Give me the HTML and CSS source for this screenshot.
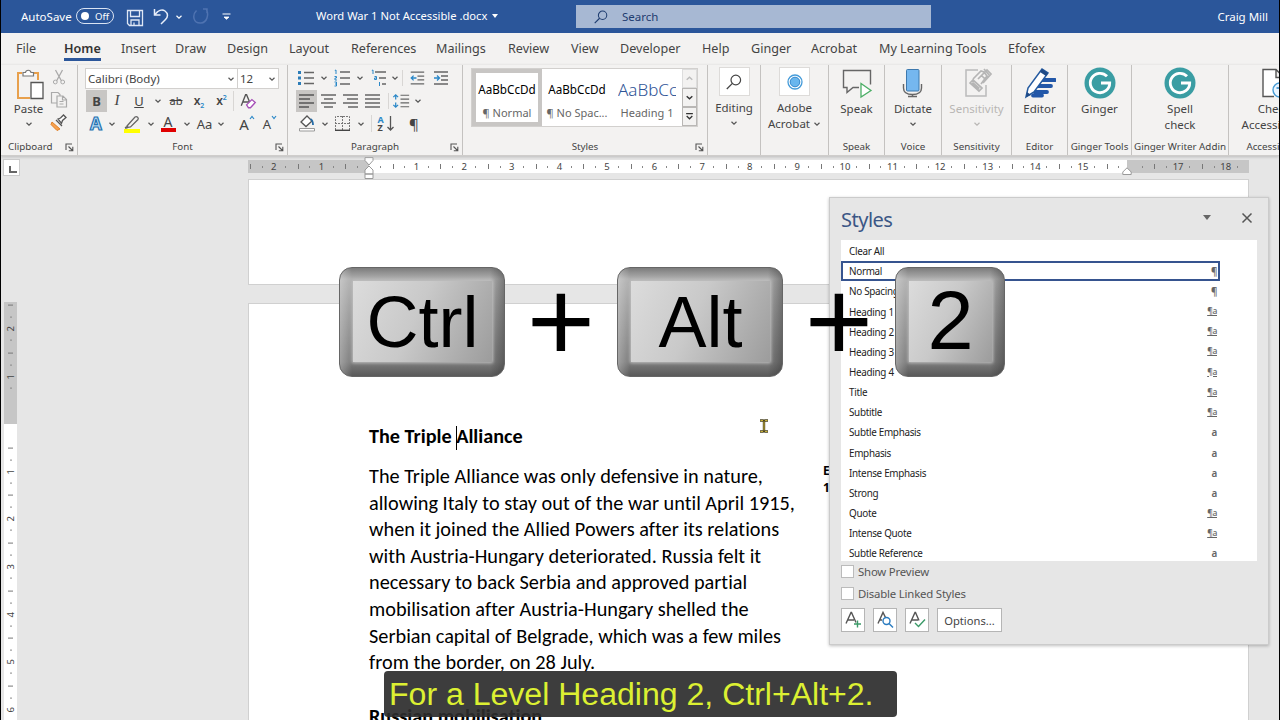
FILE: index.html
```html
<!DOCTYPE html>
<html lang="en">
<head>
    <meta charset="UTF-8">
    <meta name="viewport" content="width=device-width, initial-scale=1.0">
    <title>Word War 1 Not Accessible .docx</title>
    <link rel="stylesheet" href="styles.css">
</head>
<body>
    <!-- shared icons -->
    <svg class="defs">
        <symbol id="chev" viewBox="0 0 8 8"><path d="M1.5 2.8 4 5.2 6.5 2.8" fill="none" stroke="currentColor" stroke-width="1.2"/></symbol>
        <symbol id="launch" viewBox="0 0 9 9"><path d="M1 7V1h6M3.5 3.5l4 4M7.8 3.8v4h-4" fill="none" stroke="#555" stroke-width="1.1"/></symbol>
        <symbol id="ginger" viewBox="0 0 32 32"><circle cx="16" cy="16" r="15.5" fill="#3a9da3"/><path d="M23 9.3A9.7 9.7 0 1 0 25.7 16H17" fill="none" stroke="#fff" stroke-width="2.8"/></symbol>
        <symbol id="lens" viewBox="0 0 16 16"><circle cx="9.8" cy="6" r="4.8" fill="none" stroke="currentColor" stroke-width="1.2"/><path d="M6.4 9.4.8 15" stroke="currentColor" stroke-width="1.3"/></symbol>
    </svg>

    <div class="window">
        <div class="titlebar">
            <span class="autosave">AutoSave</span>
            <span class="toggle"><i></i>Off</span>
            <svg class="save" width="18" height="18" viewBox="0 0 18 18"><path d="M1.5 1.5h15v15h-13l-2-2zM4.5 1.5v6h9v-6M5 16.5v-5.500h8v5.500M8 16v-2.500" fill="none" stroke="#dfe7f5" stroke-width="1.3"/></svg>
            <svg class="undo" width="17" height="17" viewBox="0 0 17 17"><path d="M1.500 1v6h6M2 6.500C5 2.500 9 1 12 3c3.500 2.500 3 6 .5 8.500L8 16" fill="none" stroke="#e8eefa" stroke-width="1.5"/></svg>
            <svg class="chev undo-chev"><use href="#chev"/></svg>
            <svg class="redo" width="17" height="17" viewBox="0 0 17 17"><path d="M11 1h4v4M14.500 1.500C17 7 15 14.500 9 15 1 15.500 0 7 4.500 2.500" fill="none" stroke="#4f73b1" stroke-width="1.5"/></svg>
            <svg class="customise" width="9" height="8" viewBox="0 0 9 8"><path d="M.5 1h8" stroke="#fff"/><path d="m2 4 2.500 2.300L7 4z" fill="#fff" stroke="#fff" stroke-width=".8"/></svg>
            <span class="doc-name">Word War 1 Not Accessible .docx</span>
            <span class="caret-down"></span>
            <div class="search"><svg width="14" height="14"><use href="#lens"/></svg>Search</div>
            <span class="user">Craig Mill</span>
        </div>

        <div class="tabs">
            <span>File</span><span class="active">Home</span><span>Insert</span><span>Draw</span><span>Design</span><span>Layout</span><span>References</span><span>Mailings</span><span>Review</span><span>View</span><span>Developer</span><span>Help</span><span>Ginger</span><span>Acrobat</span><span>My Learning Tools</span><span>Efofex</span>
        </div>

        <div class="ribbon">
            <div class="group">
                <div class="clipboard">
                    <div class="paste">
                        <svg width="29" height="32" viewBox="0 0 29 32"><path d="M6 4H2v25h12M18 4h4v7" fill="none" stroke="#e8a04c" stroke-width="2"/><path d="M7 7V3.500h2.500c.5-3 5-3 5.500 0h2.500V7z" fill="#fff" stroke="#777" stroke-width="1.2"/><path d="M15 13.500h12v16H15z" fill="#fff" stroke="#555" stroke-width="1.3"/></svg>
                        <span>Paste</span>
                        <svg class="chev"><use href="#chev"/></svg>
                    </div>
                    <div class="clip-tools">
                        <svg width="14" height="16" viewBox="0 0 14 16"><path d="M3.500 1 9.500 12M10.500 1l-6 11" stroke="#aaa" stroke-width="1.300"/><circle cx="3.300" cy="13" r="1.900" fill="none" stroke="#aaa"/><circle cx="10.700" cy="13" r="1.900" fill="none" stroke="#aaa"/></svg>
                        <svg width="18" height="17" viewBox="0 0 18 17"><path d="M7 12H1.500V1.500H8l2 2V5M7 5h6l3.500 3.500V16H7zM12.500 5v4H16M9.500 10.500h4M9.500 13h4" fill="none" stroke="#aaa" stroke-width="1.200"/></svg>
                        <svg width="18" height="17" viewBox="0 0 18 17"><path d="m2 8 8 7-3 1.500L1 10.500z" fill="#f7a14e" stroke="#de7f27"/><path d="m6 6 6 6M8 5l2.500-1 3-3 2.500 2.500-3.500 3-1 2.800z" fill="#fff" stroke="#555" stroke-width="1.300"/></svg>
                    </div>
                </div>
                <div class="label">Clipboard<svg class="launch"><use href="#launch"/></svg></div>
            </div>

            <div class="group font-group">
                <div class="combos">
                    <div class="combo">Calibri (Body)<svg class="chev"><use href="#chev"/></svg></div>
                    <div class="combo">12<svg class="chev"><use href="#chev"/></svg></div>
                </div>
                <div class="row font-row1">
                    <b class="on">B</b><i class="serif">I</i><u>U</u><svg class="chev"><use href="#chev"/></svg>
                    <s>ab</s><span class="subsup">x<sub>2</sub></span><span class="subsup">x<sup>2</sup></span>
                    <svg class="bar-left" width="30" height="20" viewBox="0 0 30 20"><path d="M7.500 15 12 3.500h1L17 13M9.500 11h6" fill="none" stroke="#555" stroke-width="1.400"/><path d="m13 14 5.500-5.500 3.500 3-5 5.500h-2z" fill="#fff" stroke="#a64fb8" stroke-width="1.400"/></svg>
                </div>
                <div class="row font-row2">
                    <span class="effect">A</span><svg class="chev"><use href="#chev"/></svg>
                    <svg width="20" height="18" viewBox="0 0 20 18"><path d="m5 11 8-9c2-1 4 1 3 2.500L8.500 12 5 12.500z" fill="none" stroke="#666" stroke-width="1.300"/><path d="m3 13 3-1" stroke="#666" stroke-width="2"/><path d="M2 14h16v4H2z" fill="#ff0"/></svg>
                    <svg class="chev"><use href="#chev"/></svg>
                    <span class="colour">A</span><svg class="chev"><use href="#chev"/></svg>
                    <span class="case">Aa</span><svg class="chev"><use href="#chev"/></svg>
                    <span class="grow">A<svg width="6" height="5" viewBox="0 0 6 5"><path d="m1 4 2-2.500L5 4" fill="none" stroke="#2b88c8" stroke-width="1.200"/></svg></span>
                    <span class="grow shrink">A<svg width="6" height="5" viewBox="0 0 6 5"><path d="m1 1 2 2.500L5 1" fill="none" stroke="#2b88c8" stroke-width="1.200"/></svg></span>
                </div>
                <div class="label">Font<svg class="launch"><use href="#launch"/></svg></div>
            </div>

            <div class="group para-group">
                <div class="row para-row1">
                    <svg width="16" height="16" viewBox="0 0 16 16"><path d="M6 2.500h10M6 8h10M6 13.500h10" stroke="#666" stroke-width="1.300"/><path d="M0 1h3v3H0zM0 6.500h3v3H0zM0 12h3v3H0z" fill="#2b7cb8"/></svg>
                    <svg class="chev"><use href="#chev"/></svg>
                    <svg width="16" height="18" viewBox="0 0 16 18"><path d="M6 3h10M6 9h10M6 15h10" stroke="#666" stroke-width="1.300"/><path d="M.8 1.500 2 1v4M.5 7.500h2v1.500h-1.500v2h2M.5 13h2v4h-2M1 15h1.500" fill="none" stroke="#2b88c8"/></svg>
                    <svg class="chev"><use href="#chev"/></svg>
                    <svg width="16" height="18" viewBox="0 0 16 18"><path d="M4 3h11M8 9h7M11 15h4" stroke="#666" stroke-width="1.300"/><path d="M.8 1.500 2 1v4M3.500 7.500h2v3h-2V9h2M8.500 13v4" fill="none" stroke="#2b88c8"/></svg>
                    <svg class="chev"><use href="#chev"/></svg>
                    <svg class="bar-left" width="27" height="16" viewBox="0 0 27 16"><path d="M8 2h14M15 6h7M15 10h7M8 14h14" stroke="#666" stroke-width="1.300"/><path d="M14 8H8.500M11 5.500 8.500 8l2.500 2.500" fill="none" stroke="#2b88c8" stroke-width="1.300"/></svg>
                    <svg width="22" height="16" viewBox="0 0 22 16"><path d="M5 2h14M12 6h7M12 10h7M5 14h14" stroke="#666" stroke-width="1.300"/><path d="M5 8h5.500M8 5.500l2.500 2.500L8 10.500" fill="none" stroke="#2b88c8" stroke-width="1.300"/></svg>
                </div>
                <div class="row para-row2">
                    <span class="on"><svg width="15" height="14" viewBox="0 0 15 14"><path d="M0 1h15M0 5h11M0 9h15M0 13h10" stroke="#555" stroke-width="1.300"/></svg></span>
                    <svg width="15" height="14" viewBox="0 0 15 14"><path d="M0 1h15M3 5h9M0 9h15M3 13h9" stroke="#666" stroke-width="1.300"/></svg>
                    <svg width="15" height="14" viewBox="0 0 15 14"><path d="M0 1h15M4 5h11M0 9h15M5 13h10" stroke="#666" stroke-width="1.300"/></svg>
                    <svg width="15" height="14" viewBox="0 0 15 14"><path d="M0 1h15M0 5h15M0 9h15M0 13h15" stroke="#666" stroke-width="1.300"/></svg>
                    <svg class="bar-left" width="24" height="16" viewBox="0 0 24 16"><path d="M12 2h9M12 6h9M12 10h9M12 14h9" stroke="#666" stroke-width="1.300"/><path d="M7 1.500v5M7 9.500v5M4.500 4 7 1.500 9.500 4M4.500 12 7 14.500l2.500-2.500" fill="none" stroke="#2b88c8" stroke-width="1.300"/></svg>
                    <svg class="chev"><use href="#chev"/></svg>
                </div>
                <div class="row para-row3">
                    <svg width="18" height="17" viewBox="0 0 18 17"><path d="m3 7 6-6 5 5-6 5.500z" fill="#fff" stroke="#555" stroke-width="1.300"/><path d="M12.500 4c2 1 2.500 3 2.500 6" fill="none" stroke="#246ca8" stroke-width="1.800"/><path d="M1.500 13.500h15V16h-15z" fill="#fff" stroke="#999"/></svg>
                    <svg class="chev"><use href="#chev"/></svg>
                    <svg width="15" height="15" viewBox="0 0 15 15"><path d="M.5 14V.5h14V14M7.500 0v14M0 7.500h15" fill="none" stroke="#777" stroke-dasharray="2 1"/><path d="M0 14.300h15" stroke="#444" stroke-width="1.400"/></svg>
                    <svg class="chev"><use href="#chev"/></svg>
                    <span class="sort bar-left"><span><em>A</em>Z</span><svg width="7" height="17" viewBox="0 0 7 17"><path d="M3.500 1v14M.5 12l3 3 3-3" fill="none" stroke="#555" stroke-width="1.300"/></svg></span>
                    <span class="pilcrow">¶</span>
                </div>
                <div class="label">Paragraph<svg class="launch"><use href="#launch"/></svg></div>
            </div>

            <div class="group">
                <div class="gallery">
                    <div class="tile current"><span>AaBbCcDd</span><small>¶ Normal</small></div>
                    <div class="tile"><span>AaBbCcDd</span><small>¶ No Spac...</small></div>
                    <div class="tile heading"><span>AaBbCc</span><small>Heading 1</small></div>
                    <div class="scroller">
                        <svg viewBox="0 0 8 8" class="up"><path d="M1.500 5.200 4 2.800l2.500 2.400" fill="none" stroke="#bbb" stroke-width="1.200"/></svg>
                        <svg viewBox="0 0 8 8"><path d="M1.500 2.800 4 5.200l2.500-2.400" fill="none" stroke="#333" stroke-width="1.200"/></svg>
                        <svg viewBox="0 0 8 8"><path d="M1 1.500h6M1.500 3.500 4 6l2.500-2.500" fill="none" stroke="#333" stroke-width="1.100"/></svg>
                    </div>
                </div>
                <div class="label">Styles<svg class="launch"><use href="#launch"/></svg></div>
            </div>

            <div class="group big">
                <div class="boxed"><svg width="16" height="16"><use href="#lens"/></svg></div>
                <span>Editing</span><svg class="chev"><use href="#chev"/></svg>
            </div>

            <div class="group big">
                <div class="boxed"><svg width="16" height="16" viewBox="0 0 16 16"><circle cx="8" cy="8" r="7" fill="#fff" stroke="#459bd9" stroke-width="1.300"/><circle cx="8" cy="8" r="4.800" fill="#69b6ee" stroke="#3388cc"/></svg></div>
                <span>Adobe<br>Acrobat <svg class="chev"><use href="#chev"/></svg></span>
            </div>

            <div class="group big">
                <svg class="icon" viewBox="0 0 32 32"><path d="M18 20.500h-6L6 25.500v-5H2.500v-17h27v14" fill="none" stroke="#666" stroke-width="1.400"/><path d="M20 16.500v13.500l10-6.500z" fill="#fff" stroke="#4cae66" stroke-width="1.300"/></svg>
                <span>Speak</span>
                <div class="label">Speak</div>
            </div>

            <div class="group big">
                <svg class="icon" viewBox="0 0 32 32"><rect x="9.500" y="2.500" width="12.500" height="21.500" rx="1" fill="#75b7ef" stroke="#3d78ad"/><path d="M6.500 17v4c0 4 3 6.500 9 6.500s9-2.500 9-6.500v-4M15.500 27v3M11 29.500h9" fill="none" stroke="#666" stroke-width="1.400"/></svg>
                <span>Dictate</span><svg class="chev"><use href="#chev"/></svg>
                <div class="label">Voice</div>
            </div>

            <div class="group big">
                <svg class="icon" viewBox="0 0 32 32"><path d="M17 3H5v26h20V18" fill="none" stroke="#bbb" stroke-width="1.500"/><path d="m9 16 3-3 9 8-3 3zM12 12l8-8 3 1 3 4-6 8M17 12l9-9 4 4-8 9M20 8l4 4M23 2l6 7" fill="none" stroke="#b5b5b5" stroke-width="1.700"/><path d="m11 16 7 6" stroke="#b5b5b5" stroke-width="3"/></svg>
                <span class="dim">Sensitivity</span><svg class="chev dim"><use href="#chev"/></svg>
                <div class="label">Sensitivity</div>
            </div>

            <div class="group big">
                <svg class="icon" viewBox="0 0 32 32"><path d="M15 13h16M14 19h13M11 25h12M9 28.500h9" stroke="#2257a8" stroke-width="3.800" stroke-linecap="round"/><path d="m2 30 2-9L18 2l6 4L10 25z" fill="#fff" stroke="#245a9f" stroke-width="1.500"/><path d="m18 2 6 4-2 3-6-4zM2 30l1-5 4 3z" fill="#1f4a86"/></svg>
                <span>Editor</span>
                <div class="label">Editor</div>
            </div>

            <div class="group big">
                <svg class="icon"><use href="#ginger"/></svg>
                <span>Ginger</span>
                <div class="label">Ginger Tools</div>
            </div>

            <div class="group big">
                <svg class="icon"><use href="#ginger"/></svg>
                <span>Spell<br>check</span>
                <div class="label">Ginger Writer Addin</div>
            </div>

            <div class="group big access">
                <svg class="icon" viewBox="0 0 32 32"><path d="M16 29.500H5v-27h13l8 8v6M18 2.500v8h8" fill="#fff" stroke="#555" stroke-width="1.400"/><circle cx="22" cy="23" r="7" fill="#eaf5ff" stroke="#469bd4" stroke-width="1.400"/><path d="M22 18v6M18.500 21h7" stroke="#2f84c4" stroke-width="1.400"/></svg>
                <span>Check<br>Accessibility</span>
                <div class="label">Accessibility</div>
            </div>
        </div>

        <div class="workspace">
            <div class="left">
                <div class="tab-stop"></div>
                <div class="vruler">
                    <div class="cm">2</div><div class="cm">1</div><div class="cm"></div><div class="cm">1</div><div class="cm">2</div><div class="cm">3</div><div class="cm">4</div><div class="cm">5</div><div class="cm">6</div>
                </div>
            </div>
            <div class="canvas">
                <div class="hruler">
                    <div class="cm">2</div><div class="cm">1</div>
                    <div class="cm"><svg class="indent" width="10" height="22" viewBox="0 0 10 22"><path d="M1 .5h8v3L5 8 1 3.500zM1 17v-4l4-4 4 4v4zM1 17h8v4.500H1z" fill="#fff" stroke="#999"/></svg></div>
                    <div class="cm">1</div><div class="cm">2</div><div class="cm">3</div><div class="cm">4</div><div class="cm">5</div><div class="cm">6</div><div class="cm">7</div><div class="cm">8</div><div class="cm">9</div><div class="cm">10</div><div class="cm">11</div><div class="cm">12</div><div class="cm">13</div><div class="cm">14</div><div class="cm">15</div>
                    <div class="cm"><svg class="indent right" width="10" height="8" viewBox="0 0 10 8"><path d="M.8 7.500V5L5 .8 9.200 5v2.500z" fill="#fff" stroke="#999"/></svg></div>
                    <div class="cm">17</div><div class="cm">18</div>
                </div>
                <div class="page first"></div>
                <div class="page second">
                    <div class="text">
                        <h2>The Triple <span class="insertion"></span>Alliance</h2>
                        <p>
                            The Triple Alliance was only defensive in nature,<br>
                            allowing Italy to stay out of the war until April 1915,<br>
                            when it joined the Allied Powers after its relations<br>
                            with Austria-Hungary deteriorated. Russia felt it<br>
                            necessary to back Serbia and approved partial<br>
                            mobilisation after Austria-Hungary shelled the<br>
                            Serbian capital of Belgrade, which was a few miles<br>
                            from the border, on 28 July.
                        </p>
                        <h2>Russian mobilisation</h2>
                    </div>
                    <div class="side-note">E<br>1</div>
                </div>
            </div>
        </div>

        <!-- floating styles pane -->
        <div class="pane">
            <div class="pane-head"><span>Styles</span><i class="caret-down"></i><svg width="12" height="12" viewBox="0 0 12 12"><path d="m1.500 1.500 9 9M10.500 1.500l-9 9" stroke="#555" stroke-width="1.500"/></svg></div>
            <div class="style-list">
                <div><span>Clear All</span></div>
                <div class="selected"><span>Normal</span><b>¶</b></div>
                <div><span>No Spacing</span><b>¶</b></div>
                <div><span>Heading 1</span><u>¶a</u></div>
                <div><span>Heading 2</span><u>¶a</u></div>
                <div><span>Heading 3</span><u>¶a</u></div>
                <div><span>Heading 4</span><u>¶a</u></div>
                <div><span>Title</span><u>¶a</u></div>
                <div><span>Subtitle</span><u>¶a</u></div>
                <div><span>Subtle Emphasis</span><b>a</b></div>
                <div><span>Emphasis</span><b>a</b></div>
                <div><span>Intense Emphasis</span><b>a</b></div>
                <div><span>Strong</span><b>a</b></div>
                <div><span>Quote</span><u>¶a</u></div>
                <div><span>Intense Quote</span><u>¶a</u></div>
                <div><span>Subtle Reference</span><b>a</b></div>
            </div>
            <div class="check"><i></i>Show Preview</div>
            <div class="check"><i></i>Disable Linked Styles</div>
            <div class="pane-buttons">
                <button><svg width="20" height="20" viewBox="0 0 20 20"><path d="M3 13.500 8 2.500h.5l4.500 10M5 10h6" fill="none" stroke="#555" stroke-width="1.400"/><path d="M14.500 10.500v7M11 14h7" stroke="#3b9a68" stroke-width="1.400"/></svg></button>
                <button><svg width="20" height="20" viewBox="0 0 20 20"><path d="m3 13.500 5-11 2.500 5M5 10h2" fill="none" stroke="#555" stroke-width="1.400"/><circle cx="11.500" cy="11" r="3.500" fill="none" stroke="#2b7cc0" stroke-width="1.400"/><path d="m14 13.500 4 4" stroke="#2b7cc0" stroke-width="1.500"/></svg></button>
                <button><svg width="20" height="20" viewBox="0 0 20 20"><path d="M3 13.500 8 2.500h.5l3.500 8M5 10h6" fill="none" stroke="#555" stroke-width="1.400"/><path d="m8 13 3.500 3.500L18 9.500" fill="none" stroke="#3b9a68" stroke-width="1.400"/></svg></button>
                <button class="options">Options...</button>
            </div>
        </div>

        <svg class="mouse" width="10" height="14" viewBox="0 0 10 14"><path d="M1 1.500h3l1 1 1-1h3M1 12.500h3l1-1 1 1h3M5 2v10" fill="none" stroke="#4a4320" stroke-width="2.400"/><path d="M5 2.500v9M1.500 1.500h2.500M6 1.500h2.500M1.500 12.500h2.500M6 12.500h2.500" stroke="#c9b23a"/></svg>

        <!-- shortcut overlay -->
        <div class="shortcut">
            <div class="key"><span>Ctrl</span></div>
            <div class="plus">+</div>
            <div class="key"><span>Alt</span></div>
            <div class="plus">+</div>
            <div class="key square"><span>2</span></div>
        </div>
        <div class="caption">For a Level Heading 2, Ctrl+Alt+2.</div>
    </div>
</body>
</html>
```
FILE: styles.css
```css
* {
    box-sizing: border-box;
}

body {
    margin: 0;
    overflow: hidden;
    font-family: 'Noto Sans', 'Open Sans', sans-serif;
    font-size: 11.5px;
    color: #444;
}

svg {
    display: block;
    flex: none;
}

.defs {
    display: none;
}

.window {
    position: relative;
    width: 1280px;
    height: 720px;
    overflow: hidden;
    background-color: #e6e6e6;
    border-left: 1px solid #000;
    border-right: 1px solid #000;
    display: flex;
    flex-direction: column;
    white-space: nowrap;
}

.chev {
    width: 8px;
    height: 8px;
    color: #555;
}

/* title bar */
.titlebar {
    flex: none;
    height: 33px;
    background-color: #2b569a;
    color: #fff;
    display: flex;
    align-items: center;
    padding: 0 11px 0 20px;
}

.autosave {
    width: 55px;
    margin-top: -1px;
}

.toggle {
    width: 38px;
    height: 16px;
    border: 1.5px solid #dbe4f3;
    border-radius: 8px;
    font-size: 9.5px;
    line-height: 13px;
    display: flex;
    align-items: center;
    gap: 6px;
    padding-left: 4px;
    margin-top: -1px;
}

.toggle i {
    width: 8px;
    height: 8px;
    border-radius: 50%;
    background-color: #fff;
}

.save { margin-left: 12px; margin-top: 2px; }
.undo { margin-left: 9px; }
.undo-chev { color: #fff; margin-left: 5px; }
.redo { margin-left: 9px; }

.customise {
    margin-left: 13px;
}

.doc-name {
    margin-left: 85px;
    width: 175px;
    font-size: 11.2px;
    margin-top: -3px;
}

.caret-down {
    border: 3.5px solid transparent;
    border-top: 4px solid currentColor;
    border-bottom: none;
}

.titlebar .caret-down {
    margin-left: 1px;
    margin-top: -1px;
}

.search {
    margin-left: 78px;
    width: 355px;
    height: 23px;
    background-color: #a7b8d3;
    color: #1f3d70;
    display: flex;
    align-items: center;
    gap: 14px;
    padding-left: 18px;
}

.user {
    margin-left: auto;
}

/* tabs */
.tabs {
    flex: none;
    height: 32px;
    background-color: #f3f2f1;
    display: grid;
    grid-template-columns: 48px 57px 54px 52px 62px 62px 85px 72px 63px 49px 82px 49px 60px 68px 129px 60px;
    padding-left: 15px;
    font-size: 12.6px;
    line-height: 31px;
}

.tabs span {
    justify-self: start;
    height: 28px;
}

.tabs .active {
    font-weight: 600;
    color: #333;
    border-bottom: 3px solid #2b569a;
}

/* ribbon */
.ribbon {
    flex: none;
    height: 91px;
    background-color: #f3f2f1;
    border-bottom: 1px solid #cfcdcb;
    box-shadow: 0 1px 3px #bbb;
    display: grid;
    grid-template-columns: 77px 210px 175px 245px 53px 68px 56px 57px 70px 56px 64px 97px 90px;
    z-index: 1;
}

.group {
    position: relative;
    height: 90px;
    border-right: 1px solid #c4c2c0;
    display: flex;
    flex-direction: column;
}

.label {
    margin-top: auto;
    height: 16px;
    line-height: 16px;
    font-size: 9.8px;
    text-align: center;
    display: flex;
    justify-content: center;
}

.launch {
    width: 9px;
    height: 9px;
    position: absolute;
    right: 3px;
    bottom: 3px;
}

.clipboard {
    display: flex;
    padding: 4px 0 0 13px;
}

.clipboard + .label {
    justify-content: flex-start;
    padding-left: 7px;
}

.paste {
    width: 29px;
    display: flex;
    flex-direction: column;
    align-items: center;
}

.paste span {
    line-height: 16px;
}

.paste .chev { margin-top: 3px; }
.paste svg:first-child { align-self: flex-start; margin-left: 2px; }

.clip-tools {
    margin-left: 7px;
    display: flex;
    flex-direction: column;
    align-items: center;
    gap: 6px;
}

.combos {
    display: flex;
    margin: 3px 0 0 7px;
    height: 21px;
}

.combo {
    width: 153px;
    background-color: #fff;
    border: 1px solid #d2d0ce;
    display: flex;
    align-items: center;
    justify-content: space-between;
    padding: 0 2px;
}

.combo + .combo {
    width: 42px;
    margin-left: -1px;
}

.row {
    height: 23px;
    display: grid;
    align-items: center;
    justify-items: center;
    margin-left: 8px;
}

.on {
    width: 21px;
    height: 22px;
    background-color: #c8c6c4;
    display: flex;
    align-items: center;
    justify-content: center;
}

.bar-left {
    border-left: 1px solid #d8d6d4;
}

.font-row1 {
    grid-template-columns: 21px 20px 24px 13px 24px 22px 23px 30px;
    font-size: 13px;
}

.font-row2 {
    grid-template-columns: 20px 11px 29px 9px 26px 11px 25px 8px 44px 2px;
}

.serif {
    font-family: 'Liberation Serif', serif;
    font-size: 15px;
}

.font-row1 s { font-size: 11px; }
.subsup { font-weight: 600; line-height: 16px; font-size: 12px; }

.subsup sub,
.subsup sup {
    font-size: 7px;
    line-height: 0;
    color: #2b88c8;
}

.effect {
    font-size: 17px;
    line-height: 20px;
    font-weight: bold;
    color: #b9dcf5;
    -webkit-text-stroke: 1.2px #2672b0;
}

.colour {
    width: 15px;
    height: 17px;
    line-height: 13px;
    font-size: 14px;
    text-align: center;
    border-bottom: 4px solid #e00000;
}

.case { font-size: 13px; }

.grow {
    display: flex;
    font-size: 15px;
    line-height: 18px;
}

.shrink { font-size: 13px; }

.para-group .row { margin-left: 8px; }
.para-group .row:first-child { margin-top: 1px; }

.para-row1 { grid-template-columns: 20px 16px 20px 16px 22px 10px 31px 17px; }
.para-row2 { grid-template-columns: 21px 23px 21px 22px 34px 2px; }
.para-row3 { grid-template-columns: 22px 13px 23px 13px 30px 26px; }

.sort {
    display: flex;
    align-items: center;
    padding-left: 6px;
    font-size: 9px;
    font-weight: bold;
    line-height: 8px;
}

.sort span { width: 9px; white-space: normal; }
.sort em { font-style: normal; color: #2b88c8; display: block; }
.pilcrow { font-size: 15px; line-height: 18px; margin-left: 8px; }

/* style gallery */
.gallery {
    margin: 3px 0 0 8px;
    width: 227px;
    height: 59px;
    border: 1px solid #d2d0ce;
    background-color: #fff;
    display: grid;
    grid-template-columns: 70px 70px 70px 15px;
    grid-template-rows: 57px;
}

.tile {
    overflow: hidden;
    display: flex;
    flex-direction: column;
    align-items: center;
    padding-top: 12px;
    color: #000;
    font-size: 11.7px;
    line-height: 17px;
}

.tile small {
    font-size: 11px;
    color: #666;
    margin-top: 6px;
}

.current {
    border: 4px solid #c8c6c4;
    padding-top: 8px;
}

.heading span {
    color: #2f5496;
    font-size: 17px;
    font-weight: 300;
    width: 58px;
    overflow: hidden;
}

.scroller {
    display: grid;
    grid-template-rows: 19px 19px 19px;
    background-color: #f3f2f1;
}

.scroller svg {
    width: 15px;
    height: 19px;
    padding: 2px;
    border: 1px solid #b9b7b5;
}

.scroller .up { border-color: #ddd; }

/* large ribbon buttons */
.big {
    align-items: center;
    font-size: 11.5px;
    line-height: 15.5px;
    text-align: center;
    padding-top: 2px;
}

.boxed {
    width: 31px;
    height: 29px;
    border: 1px solid #dddbd9;
    background-color: #fff;
    display: flex;
    align-items: center;
    justify-content: center;
    margin-bottom: 4px;
}

.icon {
    width: 32px;
    height: 32px;
    margin-bottom: 2px;
}

.big > .chev { margin-top: 3px; }
.big span .chev { display: inline-block; }
.dim { color: #b8b6b4; }
.access { border: none; }

/* workspace */
.workspace {
    flex: 1;
    display: grid;
    grid-template-columns: 247px 1001px;
    min-height: 0;
}

.tab-stop {
    width: 17px;
    height: 17px;
    margin: 3px 0 0 2px;
    border: 1px solid #ccc;
    background-color: #fff;
    padding: 6px 0 0 5px;
}

.tab-stop::before {
    content: '';
    display: block;
    width: 6px;
    height: 5px;
    border-left: 2px solid #666;
    border-bottom: 2px solid #666;
}

.vruler {
    margin: 126px 0 0 3px;
    width: 13px;
    height: 418px;
    padding-top: 3px;
    overflow: hidden;
    background: linear-gradient(#c6c6c6 122px, #fff 122px);
}

.cm {
    font-size: 9.5px;
    color: #444;
    display: flex;
    align-items: center;
    justify-content: center;
    background-repeat: no-repeat;
    background-image: linear-gradient(#777, #777), linear-gradient(#888, #888), linear-gradient(#888, #888);
}

.vruler .cm {
    height: 47.6px;
    writing-mode: vertical-rl;
    transform: rotate(180deg);
    background-size: 5px 1px, 2px 1px, 2px 1px;
    background-position: 4px 100%, 5px 25%, 5px 75%;
}

.hruler {
    margin-top: 4px;
    width: 1001px;
    height: 13px;
    padding-left: 2px;
    display: flex;
    background: linear-gradient(90deg, #c6c6c6 121px, #fff 121px, #fff 879px, #c6c6c6 879px);
}

.hruler .cm {
    position: relative;
    width: 47.6px;
    flex: none;
    background-size: 1px 5px, 1px 2px, 1px 2px;
    background-position: 0 4px, 25% 6px, 75% 6px;
}

.indent {
    position: absolute;
    left: 19px;
    top: -3px;
}

.indent.right {
    left: 15px;
    top: 7px;
}

.page {
    background-color: #fff;
    border: 1px solid #d0d0d0;
}

.first {
    height: 106px;
    margin-top: 6px;
}

.second {
    height: 430px;
    margin-top: 18px;
    display: flex;
    padding: 118px 0 0 120px;
    color: #000;
}

.text {
    width: 455px;
    font-family: Carlito, Lato, sans-serif;
    font-size: 20.3px;
    font-variant-ligatures: none;
    line-height: 26.6px;
}

.text h2 {
    margin: 0;
    font-size: 20.2px;
    line-height: 28px;
}

.text p {
    margin: 13px 0 26px;
}

.insertion {
    display: inline-block;
    width: 1px;
    height: 24px;
    margin-right: -1px;
    background-color: #000;
    vertical-align: middle;
}

.side-note {
    font-weight: bold;
    font-size: 12px;
    line-height: 17px;
    margin-top: 40px;
    margin-left: -1px;
}

/* styles pane */
.pane {
    position: absolute;
    left: 828px;
    top: 197px;
    width: 440px;
    height: 448px;
    background-color: #e6e6e6;
    border: 1px solid #cbcbcb;
    box-shadow: 0 1px 3px rgba(0, 0, 0, .25);
    padding: 0 11px;
}

.pane-head {
    height: 42px;
    display: flex;
    align-items: center;
    color: #666;
}

.pane-head span {
    font-size: 20px;
    letter-spacing: -.5px;
    color: #3b5685;
}

.pane-head .caret-down {
    margin-left: auto;
    margin-right: 30px;
    margin-top: -3px;
    border-width: 4.5px;
    border-top-width: 5px;
    border-bottom-width: 0;
}

.pane-head svg { margin-right: 4px; margin-top: -2px; }

.style-list {
    height: 321px;
    background-color: #fff;
    overflow: hidden;
    padding-top: 1px;
    font-size: 9.9px;
    letter-spacing: -.3px;
    color: #222;
}

.style-list div {
    width: 379px;
    height: 20.17px;
    padding: 0 3px 0 8px;
    display: flex;
    align-items: center;
    justify-content: space-between;
}

.style-list .selected {
    border: 2px solid #36548f;
    padding: 0 1px 0 6px;
}

.style-list b,
.style-list u {
    color: #666;
    font-weight: 600;
}

.style-list u {
    font-size: 8.5px;
    font-weight: 500;
    margin-top: -2px;
}

.check {
    height: 22.5px;
    display: flex;
    align-items: center;
    font-size: 11.4px;
    letter-spacing: -.2px;
    color: #555;
}

.check i {
    width: 13px;
    height: 13px;
    background-color: #fff;
    border: 1px solid #bbb;
    margin-right: 4px;
}

.style-list + .check { margin-top: -1px; }

.pane-buttons {
    display: flex;
    gap: 8px;
    margin-top: 3px;
}

.pane-buttons button {
    width: 24px;
    height: 24px;
    padding: 0;
    background-color: #fff;
    border: 1px solid #b5b5b5;
    display: flex;
    align-items: center;
    justify-content: center;
    font: 11.2px 'Noto Sans', sans-serif;
    color: #444;
}

.pane-buttons .options { width: 65px; }

.mouse {
    position: absolute;
    left: 758px;
    top: 419px;
}

/* shortcut overlay */
.shortcut {
    position: absolute;
    left: 338px;
    top: 267px;
    display: flex;
    font-family: 'Liberation Sans', Arial, sans-serif;
    color: #000;
}

.key {
    width: 166px;
    height: 110px;
    padding: 13px 12px 14px 13px;
    border-radius: 13px;
    border: 1px solid #666;
    background:
        linear-gradient(90deg, rgba(255, 255, 255, .28), transparent 12px, transparent calc(100% - 14px), rgba(40, 40, 40, .4)),
        linear-gradient(#7c7c7c, #b0b0b0 11px, #959595 50%, #7c7c7c calc(100% - 14px), #5a5a5a);
}

.key span {
    display: block;
    height: 100%;
    text-align: center;
    font-size: 72px;
    line-height: 82px;
    background: linear-gradient(115deg, #dcdcdc, #c9c9c9 45%, #9c9c9c);
    box-shadow: 0 0 3px 1px #c0c0c0;
}

.square { width: 110px; }

.square span {
    font-size: 83px;
    line-height: 80px;
}

.plus {
    width: 112px;
    text-align: center;
    font-size: 117px;
    line-height: 108px;
}

.caption {
    position: absolute;
    left: 383px;
    top: 671px;
    width: 513px;
    height: 46px;
    padding-left: 5px;
    border-radius: 4px;
    background-color: rgba(45, 45, 45, .92);
    color: #dcf032;
    font: 32.05px/46px 'Liberation Sans', Arial, sans-serif;
}
```
